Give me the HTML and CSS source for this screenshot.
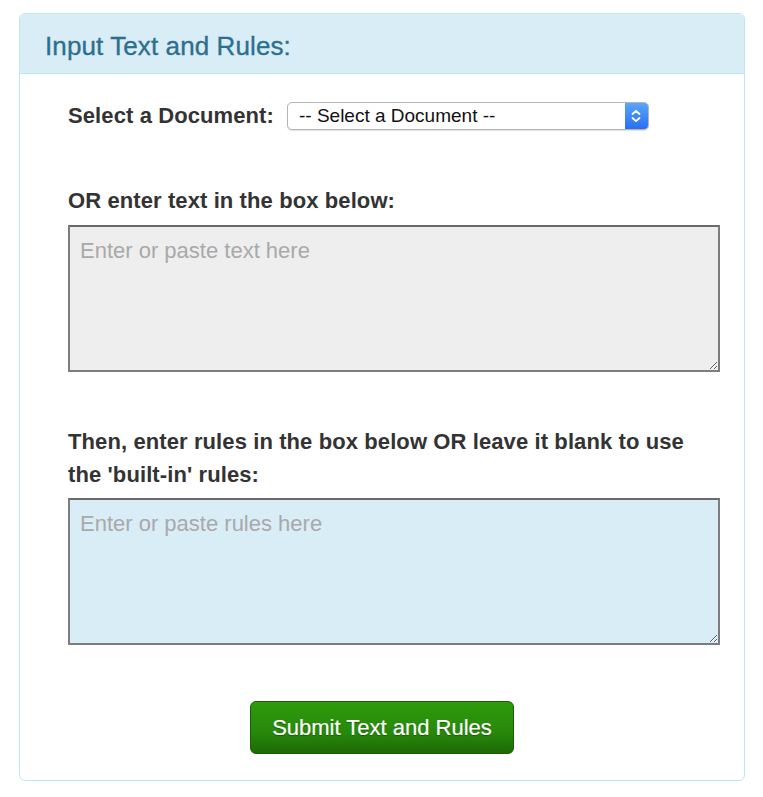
FILE: index.html
```html
<!DOCTYPE html>
<html>
<head>
<meta charset="utf-8">
<link rel="stylesheet" href="styles.css">
</head>
<body>
<div class="panel">
  <div class="panel-heading">Input Text and Rules:</div>
  <div class="panel-body">
    <div class="select-row">
      <label class="label">Select a Document:</label>
      <div class="select">
        <span class="select-text">-- Select a Document --</span>
        <span class="select-arrow">
          <svg width="12" height="16" viewBox="0 0 12 16"><path d="M2.5 6 L6 2.8 L9.5 6 M2.5 10 L6 13.2 L9.5 10" fill="none" stroke="#fff" stroke-width="1.8" stroke-linecap="round" stroke-linejoin="round"/></svg>
        </span>
      </div>
    </div>
    <div class="label block-label">OR enter text in the box below:</div>
    <textarea class="box box-gray" placeholder="Enter or paste text here"></textarea>
    <div class="label block-label two-line">Then, enter rules in the box below OR leave it blank to use the 'built-in' rules:</div>
    <textarea class="box box-blue" placeholder="Enter or paste rules here"></textarea>
    <div class="actions">
      <button class="btn-submit">Submit Text and Rules</button>
    </div>
  </div>
</div>
</body>
</html>
```
FILE: styles.css
```css
html, body {
  margin: 0;
  padding: 0;
  background: #fff;
  font-family: "Liberation Sans", Arial, sans-serif;
}
body {
  padding: 13px 18px 0 19px;
}
.panel {
  width: 724px;
  border: 1px solid #bce8f1;
  border-radius: 6px;
  overflow: hidden;
}
.panel-heading {
  background: #d9edf7;
  border-bottom: 1px solid #bce8f1;
  height: 60px;
  box-sizing: border-box;
  padding: 17px 0 0 25px;
  color: #2d6f8e;
  font-size: 26px;
  line-height: 30px;
  letter-spacing: 0.1px;
  -webkit-text-stroke: 0.35px #2d6f8e;
}
.panel-body {
  padding: 28px 24px 26px 48px;
}
.select-row {
  display: flex;
  align-items: center;
  gap: 13px;
  height: 28px;
}
.label {
  font-weight: bold;
  font-size: 22px;
  color: #333;
  letter-spacing: 0.1px;
}
.select {
  width: 362px;
  height: 28px;
  box-sizing: border-box;
  border: 1px solid #b5b5b5;
  border-radius: 5px;
  display: flex;
  align-items: stretch;
  background: #fff;
  box-shadow: 0 1px 1px rgba(0,0,0,0.12);
  overflow: hidden;
}
.select-text {
  flex: 1;
  padding-left: 11px;
  font-size: 19px;
  line-height: 26px;
  color: #111;
}
.select-arrow {
  width: 23px;
  background: linear-gradient(#5aa6fb, #2a6ef2);
  display: flex;
  align-items: center;
  justify-content: center;
}
.block-label {
  margin-top: 58px;
  line-height: 26px;
}
.two-line {
  line-height: 33px;
  margin-top: 53px;
  max-width: 630px;
}
.box {
  display: block;
  width: 652px;
  height: 147px;
  box-sizing: border-box;
  margin-top: 11px;
  border: 2px solid #7d7d7d;
  border-top-color: #6a6a6a;
  padding: 11px 10px;
  font-family: "Liberation Sans", Arial, sans-serif;
  font-size: 22px;
  color: #333;
  outline: none;
}
.box::placeholder {
  color: #a9a9a9;
}
.box-gray {
  background: #eeeeee;
}
.box-blue {
  background: #d9edf7;
  margin-top: 7px;
}
.actions {
  display: flex;
  justify-content: center;
  margin-top: 56px;
  margin-left: -24px;
}
.btn-submit {
  width: 264px;
  height: 53px;
  border: 1px solid #1b5c06;
  border-radius: 6px;
  background: linear-gradient(#2f9b0c, #27880a 60%, #1d6a05);
  color: #fff;
  font-family: "Liberation Sans", Arial, sans-serif;
  font-size: 22px;
  text-shadow: 0 1px 1px rgba(0,0,0,0.35);
  -webkit-text-stroke: 0.2px #fff;
  cursor: pointer;
}
```
